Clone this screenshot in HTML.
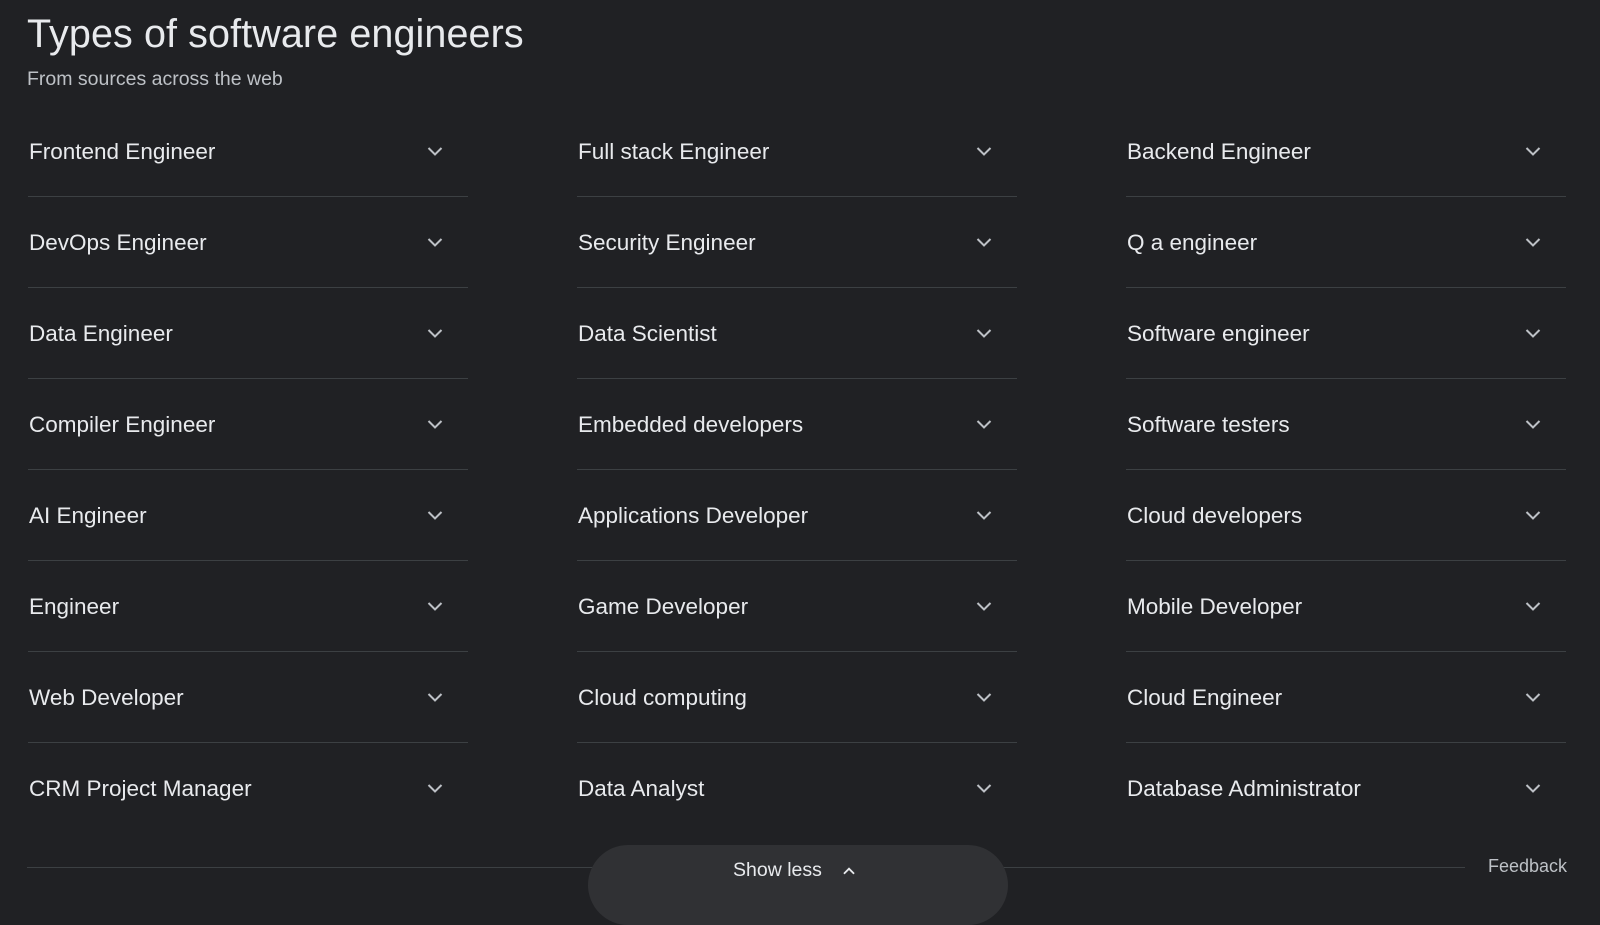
<!DOCTYPE html>
<html><head><meta charset="utf-8"><style>
body{margin:0;width:1600px;height:890px;background:#202124;overflow:hidden;font-family:"Liberation Sans",Arial,sans-serif;position:relative}
h1{position:absolute;left:27px;top:12px;margin:0;font-weight:400;font-size:39.5px;color:#e8eaed;letter-spacing:0.1px}
.sub{position:absolute;left:27px;top:68px;font-size:19.5px;color:#bdc1c6}
.col{position:absolute;top:106px;width:440px}
.row{height:90px;border-bottom:1px solid #3c4043;position:relative}
.row:last-child{border-bottom:none}
.row span{position:absolute;left:1px;top:33px;font-size:22.5px;color:#e8eaed}
.row svg{position:absolute;left:395px;top:33px}
.line{position:absolute;left:27px;top:867px;width:1438px;height:1px;background:#3c4043}
.pill{position:absolute;left:588px;top:845px;width:420px;height:80px;border-radius:40px;background:#303134;color:#e8eaed;font-size:19.5px}
.pill span{position:absolute;left:145px;top:14px}
.pill svg{position:absolute;left:250px;top:15px}
.fb{position:absolute;left:1488px;top:856px;font-size:18px;color:#bdc1c6}
</style></head><body>
<h1>Types of software engineers</h1>
<div class="sub">From sources across the web</div>
<div class="col" style="left:28px">
<div class="row"><span>Frontend Engineer</span><svg width="24" height="24" viewBox="0 0 24 24"><path d="M5.5 9l6.5 6.5 6.5-6.5" fill="none" stroke="#bdc1c6" stroke-width="2"/></svg></div>
<div class="row"><span>DevOps Engineer</span><svg width="24" height="24" viewBox="0 0 24 24"><path d="M5.5 9l6.5 6.5 6.5-6.5" fill="none" stroke="#bdc1c6" stroke-width="2"/></svg></div>
<div class="row"><span>Data Engineer</span><svg width="24" height="24" viewBox="0 0 24 24"><path d="M5.5 9l6.5 6.5 6.5-6.5" fill="none" stroke="#bdc1c6" stroke-width="2"/></svg></div>
<div class="row"><span>Compiler Engineer</span><svg width="24" height="24" viewBox="0 0 24 24"><path d="M5.5 9l6.5 6.5 6.5-6.5" fill="none" stroke="#bdc1c6" stroke-width="2"/></svg></div>
<div class="row"><span>AI Engineer</span><svg width="24" height="24" viewBox="0 0 24 24"><path d="M5.5 9l6.5 6.5 6.5-6.5" fill="none" stroke="#bdc1c6" stroke-width="2"/></svg></div>
<div class="row"><span>Engineer</span><svg width="24" height="24" viewBox="0 0 24 24"><path d="M5.5 9l6.5 6.5 6.5-6.5" fill="none" stroke="#bdc1c6" stroke-width="2"/></svg></div>
<div class="row"><span>Web Developer</span><svg width="24" height="24" viewBox="0 0 24 24"><path d="M5.5 9l6.5 6.5 6.5-6.5" fill="none" stroke="#bdc1c6" stroke-width="2"/></svg></div>
<div class="row"><span>CRM Project Manager</span><svg width="24" height="24" viewBox="0 0 24 24"><path d="M5.5 9l6.5 6.5 6.5-6.5" fill="none" stroke="#bdc1c6" stroke-width="2"/></svg></div>
</div>
<div class="col" style="left:577px">
<div class="row"><span>Full stack Engineer</span><svg width="24" height="24" viewBox="0 0 24 24"><path d="M5.5 9l6.5 6.5 6.5-6.5" fill="none" stroke="#bdc1c6" stroke-width="2"/></svg></div>
<div class="row"><span>Security Engineer</span><svg width="24" height="24" viewBox="0 0 24 24"><path d="M5.5 9l6.5 6.5 6.5-6.5" fill="none" stroke="#bdc1c6" stroke-width="2"/></svg></div>
<div class="row"><span>Data Scientist</span><svg width="24" height="24" viewBox="0 0 24 24"><path d="M5.5 9l6.5 6.5 6.5-6.5" fill="none" stroke="#bdc1c6" stroke-width="2"/></svg></div>
<div class="row"><span>Embedded developers</span><svg width="24" height="24" viewBox="0 0 24 24"><path d="M5.5 9l6.5 6.5 6.5-6.5" fill="none" stroke="#bdc1c6" stroke-width="2"/></svg></div>
<div class="row"><span>Applications Developer</span><svg width="24" height="24" viewBox="0 0 24 24"><path d="M5.5 9l6.5 6.5 6.5-6.5" fill="none" stroke="#bdc1c6" stroke-width="2"/></svg></div>
<div class="row"><span>Game Developer</span><svg width="24" height="24" viewBox="0 0 24 24"><path d="M5.5 9l6.5 6.5 6.5-6.5" fill="none" stroke="#bdc1c6" stroke-width="2"/></svg></div>
<div class="row"><span>Cloud computing</span><svg width="24" height="24" viewBox="0 0 24 24"><path d="M5.5 9l6.5 6.5 6.5-6.5" fill="none" stroke="#bdc1c6" stroke-width="2"/></svg></div>
<div class="row"><span>Data Analyst</span><svg width="24" height="24" viewBox="0 0 24 24"><path d="M5.5 9l6.5 6.5 6.5-6.5" fill="none" stroke="#bdc1c6" stroke-width="2"/></svg></div>
</div>
<div class="col" style="left:1126px">
<div class="row"><span>Backend Engineer</span><svg width="24" height="24" viewBox="0 0 24 24"><path d="M5.5 9l6.5 6.5 6.5-6.5" fill="none" stroke="#bdc1c6" stroke-width="2"/></svg></div>
<div class="row"><span>Q a engineer</span><svg width="24" height="24" viewBox="0 0 24 24"><path d="M5.5 9l6.5 6.5 6.5-6.5" fill="none" stroke="#bdc1c6" stroke-width="2"/></svg></div>
<div class="row"><span>Software engineer</span><svg width="24" height="24" viewBox="0 0 24 24"><path d="M5.5 9l6.5 6.5 6.5-6.5" fill="none" stroke="#bdc1c6" stroke-width="2"/></svg></div>
<div class="row"><span>Software testers</span><svg width="24" height="24" viewBox="0 0 24 24"><path d="M5.5 9l6.5 6.5 6.5-6.5" fill="none" stroke="#bdc1c6" stroke-width="2"/></svg></div>
<div class="row"><span>Cloud developers</span><svg width="24" height="24" viewBox="0 0 24 24"><path d="M5.5 9l6.5 6.5 6.5-6.5" fill="none" stroke="#bdc1c6" stroke-width="2"/></svg></div>
<div class="row"><span>Mobile Developer</span><svg width="24" height="24" viewBox="0 0 24 24"><path d="M5.5 9l6.5 6.5 6.5-6.5" fill="none" stroke="#bdc1c6" stroke-width="2"/></svg></div>
<div class="row"><span>Cloud Engineer</span><svg width="24" height="24" viewBox="0 0 24 24"><path d="M5.5 9l6.5 6.5 6.5-6.5" fill="none" stroke="#bdc1c6" stroke-width="2"/></svg></div>
<div class="row"><span>Database Administrator</span><svg width="24" height="24" viewBox="0 0 24 24"><path d="M5.5 9l6.5 6.5 6.5-6.5" fill="none" stroke="#bdc1c6" stroke-width="2"/></svg></div>
</div>
<div class="line"></div>
<div class="pill"><span>Show less</span><svg width="22" height="22" viewBox="0 0 24 24"><path d="M6.5 15l5.5-5.5 5.5 5.5" fill="none" stroke="#e8eaed" stroke-width="2"/></svg></div>
<div class="fb">Feedback</div>
</body></html>
